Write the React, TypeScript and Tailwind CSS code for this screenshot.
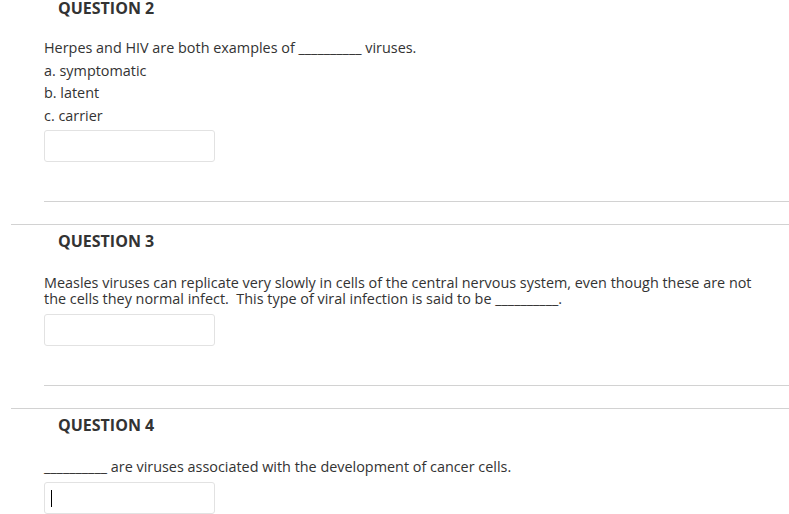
import React from "react";

function Input({ caret = false }: { caret?: boolean }) {
  return (
    <div className="mt-[7px] flex h-[32px] w-[171px] items-center rounded-[3px] border border-[#e2e2e2] bg-white pl-[6px]">
      {caret && <div className="h-[17px] w-px bg-black" />}
    </div>
  );
}

function Header({ n }: { n: number }) {
  return (
    <div className="pl-[47px] text-[16px] font-bold leading-[18px] text-[#333]">QUESTION {n}</div>
  );
}

export default function App() {
  return (
    <div className="h-[514px] w-[789px] overflow-hidden bg-white text-[14.4px] leading-[16px] text-[#333] font-['Open_Sans',sans-serif]">
      <div className="pl-[11px]">
        {/* Question 2 */}
        <div className="mt-[-1px]">
          <Header n={2} />
          <div className="pl-[33px]">
            <p className="mt-[23px]">Herpes and HIV are both examples of __________ viruses.</p>
            <p className="mt-[7px]">a. symptomatic</p>
            <p className="mt-[6px]">b. latent</p>
            <p className="mt-[7px]">c. carrier</p>
            <div className="mt-[-1px]">
              <Input />
            </div>
            <div className="mt-[39px] h-px bg-[#d2d2d2]" />
          </div>
        </div>

        {/* Question 3 */}
        <div className="mt-[22px] border-t border-[#d2d2d2]">
          <div className="pt-[7px]">
            <Header n={3} />
          </div>
          <div className="pl-[33px]">
            <p className="mt-[25px] pr-[25px]">
              Measles viruses can replicate very slowly in cells of the central nervous system, even though these are not the cells they normal infect.&nbsp; This type of viral infection is said to be __________.
            </p>
            <Input />
            <div className="mt-[39px] h-px bg-[#d2d2d2]" />
          </div>
        </div>

        {/* Question 4 */}
        <div className="mt-[22px] border-t border-[#d2d2d2]">
          <div className="pt-[7px]">
            <Header n={4} />
          </div>
          <div className="pl-[33px]">
            <p className="mt-[25px]">__________ are viruses associated with the development of cancer cells.</p>
            <Input caret />
          </div>
        </div>
      </div>
    </div>
  );
}
